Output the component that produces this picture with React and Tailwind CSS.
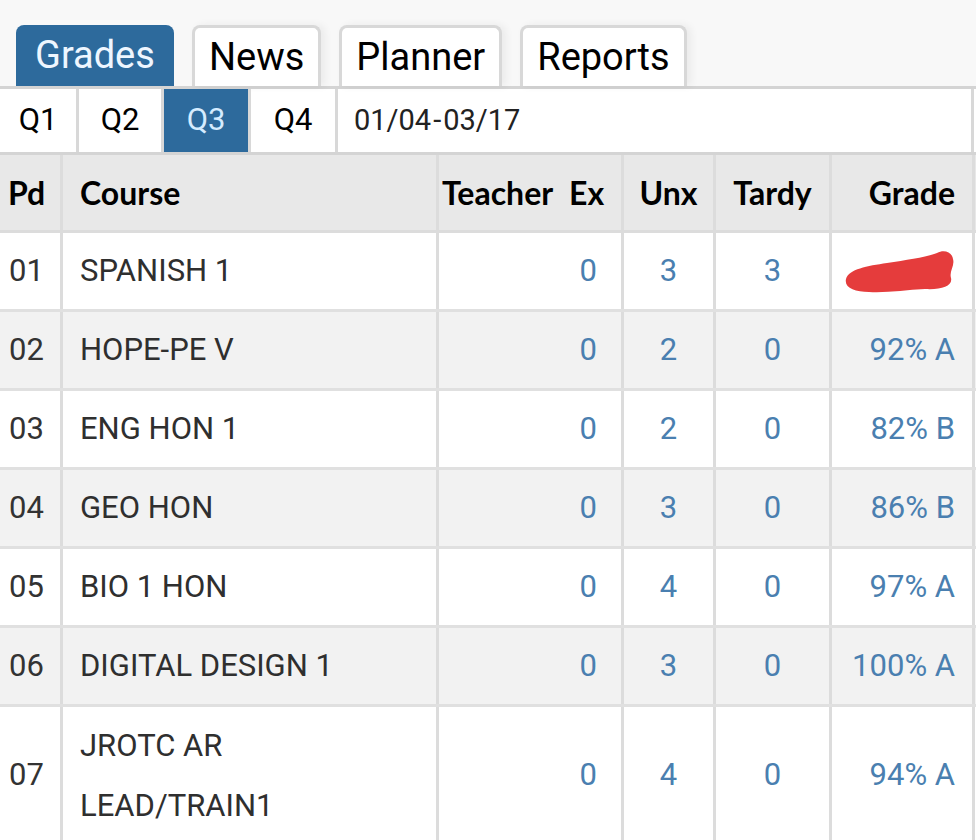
import React from 'react';

const rows = [
    { pd: '01', course: ['SPANISH 1'], ex: '0', unx: '3', tardy: '3', grade: null },
    { pd: '02', course: ['HOPE-PE V'], ex: '0', unx: '2', tardy: '0', grade: '92% A' },
    { pd: '03', course: ['ENG HON 1'], ex: '0', unx: '2', tardy: '0', grade: '82% B' },
    { pd: '04', course: ['GEO HON'], ex: '0', unx: '3', tardy: '0', grade: '86% B' },
    { pd: '05', course: ['BIO 1 HON'], ex: '0', unx: '4', tardy: '0', grade: '97% A' },
    { pd: '06', course: ['DIGITAL DESIGN 1'], ex: '0', unx: '3', tardy: '0', grade: '100% A' },
    { pd: '07', course: ['JROTC AR', 'LEAD/TRAIN1'], ex: '0', unx: '4', tardy: '0', grade: '94% A' },
];

const tabs = ['Grades', 'News', 'Planner', 'Reports'];
const terms = ['Q1', 'Q2', 'Q3', 'Q4'];
const termWidths = ['w-[79px]', 'w-[85px]', 'w-[87px]', 'w-[87px]'];

function Scribble() {
    return (
        <svg width="112" height="48" viewBox="0 0 112 48">
            <path d="M3 32 C6 22 24 19 44 16 C64 13 84 10 94 6 C101 2 109 5 110 12 C112 19 106 24 108 31 C110 39 98 43 82 42 C62 43 44 46 26 45 C12 45 1 41 3 32 Z" fill="#e53c3c" />
        </svg>
    );
}

export default function App() {
    const cell = 'border-r-[3px] border-[#dcdcdc] flex items-center';
    return (
        <div className="w-[976px] h-[840px] overflow-hidden bg-white font-['Roboto',sans-serif]">
            <div className="bg-[#f8f8f8] h-[89px] flex items-end gap-[18px] pl-[16px] border-b-[3px] border-[#d4d4d4]">
                {tabs.map((t, i) => (
                    <div key={t} className={i === 0
                        ? 'h-[61px] px-[19px] rounded-t-[8px] bg-[#2d6a9c] text-[#eef6ff] text-[38px] flex items-center'
                        : 'h-[61px] px-[14px] rounded-t-[8px] bg-white border-[3px] border-b-0 border-[#d8d8d8] text-black text-[38px] flex items-center shadow-[4px_0_8px_rgba(0,0,0,0.06)]'}>
                        {t}
                    </div>
                ))}
            </div>
            <div className="h-[66px] flex border-b-[3px] border-[#d4d4d4] text-[31px]">
                {terms.map((q, i) => (
                    <div key={q} className={`${termWidths[i]} border-r-[3px] border-[#d8d8d8] flex items-center justify-center ${i === 2 ? 'bg-[#2d6a9c] text-[#d5ecff]' : 'text-black'}`}>{q}</div>
                ))}
                <div className="w-[636px] border-r-[3px] border-[#d8d8d8] flex items-center pl-[16px] text-[29px] text-[#222]">
                    <span>01/04</span><span className="px-[2px]">-</span><span>03/17</span>
                </div>
            </div>
            <div className="flex h-[78px] bg-[#e8e8e8] border-b-[3px] border-[#dcdcdc] font-['Lato',sans-serif] font-bold text-[32px] text-black">
                <div className={`${cell} w-[63px] pl-[8px]`}>Pd</div>
                <div className={`${cell} w-[376px] pl-[17px]`}>Course</div>
                <div className="w-[118px] flex items-center pl-[3px]">Teacher</div>
                <div className={`${cell} w-[67px] pl-[12px]`}>Ex</div>
                <div className={`${cell} w-[92px] justify-center`}>Unx</div>
                <div className={`${cell} w-[116px] justify-center`}>Tardy</div>
                <div className={`${cell} w-[143px] justify-end pr-[17px]`}>Grade</div>
            </div>
            {rows.map((r, i) => (
                <div key={r.pd} className={`flex border-b-[3px] border-[#e0e0e0] text-[31px] ${r.course.length > 1 ? 'h-[140px]' : 'h-[79px]'} ${i % 2 === 1 ? 'bg-[#f2f2f2]' : 'bg-white'}`}>
                    <div className={`${cell} w-[63px] pl-[9px] text-[#333]`}>{r.pd}</div>
                    <div className={`${cell} w-[376px] pl-[17px] text-[#2f2f2f]`}>
                        <div className="leading-[60px]">
                            {r.course.map((c) => <div key={c}>{c}</div>)}
                        </div>
                    </div>
                    <div className="w-[118px]"></div>
                    <div className={`${cell} w-[67px] justify-end pr-[24px] text-[#4a7fb0]`}>{r.ex}</div>
                    <div className={`${cell} w-[92px] justify-center text-[#4a7fb0]`}>{r.unx}</div>
                    <div className={`${cell} w-[116px] justify-center text-[#4a7fb0]`}>{r.tardy}</div>
                    <div className={`${cell} w-[143px] justify-end pr-[17px] text-[#4a7fb0]`}>
                        {r.grade ? r.grade : <Scribble />}
                    </div>
                </div>
            ))}
        </div>
    );
}
